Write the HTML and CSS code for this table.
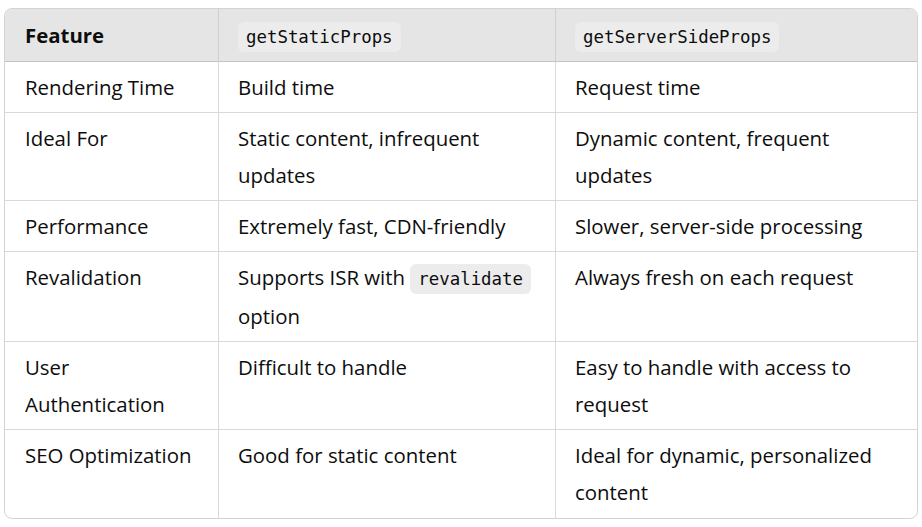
FILE: index.html
```html
<!DOCTYPE html>
<html>
<head>
<meta charset="utf-8">
<link rel="stylesheet" href="styles.css">
</head>
<body>
<div class="wrap">
<table class="cmp">
<colgroup><col class="c1"><col class="c2"><col class="c3"></colgroup>
<thead>
<tr><th>Feature</th><th><code>getStaticProps</code></th><th><code>getServerSideProps</code></th></tr>
</thead>
<tbody>
<tr><td>Rendering Time</td><td>Build time</td><td>Request time</td></tr>
<tr><td>Ideal For</td><td>Static content, infrequent updates</td><td>Dynamic content, frequent updates</td></tr>
<tr><td>Performance</td><td>Extremely fast, CDN-friendly</td><td>Slower, server-side processing</td></tr>
<tr><td>Revalidation</td><td>Supports ISR with <code>revalidate</code> option</td><td>Always fresh on each request</td></tr>
<tr><td>User Authentication</td><td>Difficult to handle</td><td>Easy to handle with access to request</td></tr>
<tr><td>SEO Optimization</td><td>Good for static content</td><td>Ideal for dynamic, personalized content</td></tr>
</tbody>
</table>
</div>
</body>
</html>
```
FILE: styles.css
```css
html, body { margin: 0; padding: 0; background: #fff; }
.wrap { padding: 8px 4px 0 4px; }
.cmp {
  width: 914px;
  table-layout: fixed;
  border-collapse: separate;
  border-spacing: 0;
  border: 1px solid #d3d3d3;
  border-radius: 8px;
  overflow: hidden;
  font-family: "Open Sans", sans-serif;
  font-size: 20.4px;
  line-height: 37px;
  color: #0d0d0d;
}
.c1 { width: 213px; }
.c2 { width: 337px; }
.c3 { width: 362px; }
.cmp th, .cmp td {
  text-align: left;
  vertical-align: top;
  padding: 7px 20px 6px 19px;
  border-left: 1px solid #d9d9d9;
  border-bottom: 1px solid #d9d9d9;
}
.cmp th:first-child, .cmp td:first-child { border-left: none; padding-left: 20px; }
.cmp tbody tr:last-child td { border-bottom: none; padding-bottom: 7px; }
.cmp thead th {
  background: #e5e5e5;
  font-weight: 700;
  border-bottom: 1px solid #c4c4c4;
  border-left-color: #cfcfcf;
  padding-top: 8px;
  padding-bottom: 7px;
}
.cmp code {
  display: inline-block;
  font-family: "DejaVu Sans Mono", "Liberation Mono", monospace;
  font-size: 17.4px;
  line-height: 22px;
  font-weight: 400;
  background: #ececec;
  border-radius: 6px;
  padding: 4px 8px;
}
.cmp td code { margin-bottom: 4px; }
```
